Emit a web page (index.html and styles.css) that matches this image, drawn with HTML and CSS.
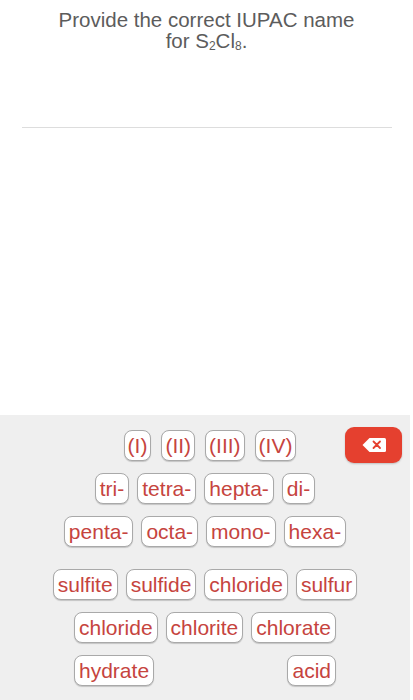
FILE: index.html
```html
<!DOCTYPE html>
<html lang="en">
<head>
<meta charset="utf-8">
<title>IUPAC name</title>
<link rel="stylesheet" href="styles.css">
</head>
<body>
<main class="page">
  <section class="question">
    <p class="prompt">Provide the correct IUPAC name<br>for S<sub>2</sub>Cl<sub>8</sub>.</p>
    <div class="answer-line"></div>
  </section>
  <section class="keyboard">
    <div class="group">
      <div class="row row-numerals">
        <button class="chip chip-narrow">(I)</button>
        <button class="chip chip-narrow">(II)</button>
        <button class="chip chip-narrow">(III)</button>
        <button class="chip chip-narrow">(IV)</button>
      </div>
      <div class="row">
        <button class="chip">tri-</button>
        <button class="chip">tetra-</button>
        <button class="chip">hepta-</button>
        <button class="chip">di-</button>
      </div>
      <div class="row">
        <button class="chip">penta-</button>
        <button class="chip">octa-</button>
        <button class="chip">mono-</button>
        <button class="chip">hexa-</button>
      </div>
    </div>
    <div class="group group-words">
      <div class="row">
        <button class="chip">sulfite</button>
        <button class="chip">sulfide</button>
        <button class="chip">chloride</button>
        <button class="chip">sulfur</button>
      </div>
      <div class="block">
        <div class="row">
          <button class="chip">chloride</button>
          <button class="chip">chlorite</button>
          <button class="chip">chlorate</button>
        </div>
        <div class="row row-spread">
          <button class="chip">hydrate</button>
          <button class="chip">acid</button>
        </div>
      </div>
    </div>
    <button class="delete" aria-label="Delete">
      <svg width="26" height="16" viewBox="0 0 26 16">
        <path d="M8.5 1 H23.5 Q25 1 25 2.5 V13.5 Q25 15 23.5 15 H8.5 L1.5 8 Z" fill="#ffffff"/>
        <path d="M12.5 4.5 L19 11 M19 4.5 L12.5 11" stroke="#e5402f" stroke-width="1.8" stroke-linecap="round"/>
      </svg>
    </button>
  </section>
</main>
</body>
</html>
```

FILE: styles.css
```css
html, body {
  margin: 0;
  padding: 0;
  background: #ffffff;
}

.page {
  width: 413px;
  height: 700px;
  display: flex;
  flex-direction: column;
  font-family: "Liberation Sans", Arial, sans-serif;
}

.question {
  height: 415px;
  display: flex;
  flex-direction: column;
  align-items: center;
}

.prompt {
  margin: 9px 0 0;
  font-size: 20.5px;
  line-height: 21px;
  color: #5c5c5c;
  text-align: center;
}

.prompt sub {
  font-size: 12px;
  vertical-align: -2px;
  line-height: 0;
}

.answer-line {
  margin-top: 76px;
  width: 370px;
  height: 1px;
  background: #dddddd;
}

.keyboard {
  position: relative;
  width: 410px;
  flex: 1;
  background: #efefef;
  padding-top: 15px;
  display: flex;
  flex-direction: column;
  align-items: center;
  gap: 22px;
  box-sizing: border-box;
}

.group {
  display: flex;
  flex-direction: column;
  align-items: center;
  gap: 12px;
}

.block {
  display: flex;
  flex-direction: column;
  gap: 12px;
}

.row {
  display: flex;
  justify-content: center;
  gap: 8px;
}

.row-numerals {
  gap: 10px;
  margin-left: 10px;
}

.row-spread {
  justify-content: space-between;
}

.chip {
  font-family: "Liberation Sans", Arial, sans-serif;
  font-size: 21px;
  line-height: 25px;
  height: 31px;
  padding: 2px 4px;
  margin: 0;
  color: #c6443e;
  background: #ffffff;
  border: 1px solid #a9a9a9;
  border-radius: 8px;
  box-shadow: 0 1px 1px rgba(0, 0, 0, 0.18);
  box-sizing: border-box;
}

.chip-narrow {
  padding: 2px 3px;
}

.delete {
  position: absolute;
  top: 12px;
  right: 8px;
  width: 57px;
  height: 36px;
  margin: 0;
  padding: 0;
  border: none;
  border-radius: 9px;
  background: #e5402f;
  box-shadow: 0 1px 2px rgba(0, 0, 0, 0.2);
  display: flex;
  align-items: center;
  justify-content: center;
}

.delete svg {
  display: block;
}
```
